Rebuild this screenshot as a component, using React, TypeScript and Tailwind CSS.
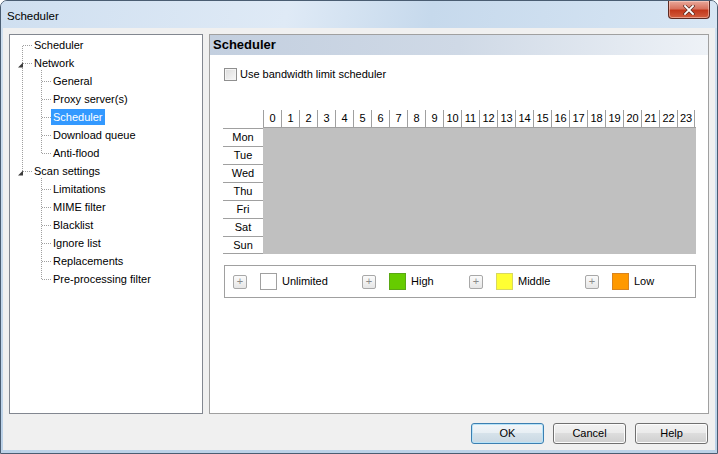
import React from "react";

const font = { fontFamily: '"Liberation Sans", Arial, sans-serif' };

type TreeItem = { label: string; level: 1 | 2; selected?: boolean };

const treeItems: TreeItem[] = [
  { label: "Scheduler", level: 1 },
  { label: "Network", level: 1 },
  { label: "General", level: 2 },
  { label: "Proxy server(s)", level: 2 },
  { label: "Scheduler", level: 2, selected: true },
  { label: "Download queue", level: 2 },
  { label: "Anti-flood", level: 2 },
  { label: "Scan settings", level: 1 },
  { label: "Limitations", level: 2 },
  { label: "MIME filter", level: 2 },
  { label: "Blacklist", level: 2 },
  { label: "Ignore list", level: 2 },
  { label: "Replacements", level: 2 },
  { label: "Pre-processing filter", level: 2 },
];

const days = ["Mon", "Tue", "Wed", "Thu", "Fri", "Sat", "Sun"];
const hours = Array.from({ length: 24 }, (_, i) => i);

// group widths keep the items at the same x as the original dialog
const legend = [
  { label: "Unlimited", swatch: "bg-white border-[#a0a0a0]", width: "w-[129px]" },
  { label: "High", swatch: "bg-[#66cc00] border-[#5aa814]", width: "w-[107px]" },
  { label: "Middle", swatch: "bg-[#ffff33] border-[#d8d860]", width: "w-[116px]" },
  { label: "Low", swatch: "bg-[#ff9900] border-[#d88420]", width: "w-[80px]" },
];

// connector lines of the tree, coords relative to the tree's padding box
function TreeLines() {
  const dot = { stroke: "#a0a0a0", strokeDasharray: "1 1", strokeWidth: 1 };
  const rowY = (i: number) => 10 + i * 18 + 0.5;
  const group1 = [2, 3, 4, 5, 6];
  const group2 = [8, 9, 10, 11, 12, 13];
  return (
    <svg className="pointer-events-none absolute left-0 top-0" width="192" height="300" shapeRendering="crispEdges">
      <line x1="12.5" y1={rowY(0)} x2="12.5" y2={rowY(7)} {...dot} />
      {[0, 1, 7].map((i) => (
        <line key={i} x1="13" y1={rowY(i)} x2="22" y2={rowY(i)} {...dot} />
      ))}
      <line x1="31.5" y1={rowY(1) + 6} x2="31.5" y2={rowY(6)} {...dot} />
      <line x1="31.5" y1={rowY(7) + 6} x2="31.5" y2={rowY(13)} {...dot} />
      {[...group1, ...group2].map((i) => (
        <line key={i} x1="32" y1={rowY(i)} x2="41" y2={rowY(i)} {...dot} />
      ))}
      {[1, 7].map((i) => (
        <polygon key={i} points={`13,${rowY(i) - 1} 13,${rowY(i) + 4} 8,${rowY(i) + 4}`} fill="#3b3b3b" shapeRendering="auto" />
      ))}
    </svg>
  );
}

function PushButton({ label, isDefault }: { label: string; isDefault?: boolean }) {
  return (
    <button
      type="button"
      className={`flex h-[21px] w-[73px] items-center justify-center rounded-[3px] border text-[11px] text-black ${
        isDefault
          ? "border-[#3c7fb1] bg-[linear-gradient(to_bottom,#f2f6f9_0%,#e8eff4_45%,#d6e2ea_50%,#c9d8e3_100%)] shadow-[inset_0_0_0_1px_#b8e3f8]"
          : "border-[#707070] bg-[linear-gradient(to_bottom,#f2f2f2_0%,#ebebeb_45%,#dddddd_50%,#cfcfcf_100%)] shadow-[inset_0_0_0_1px_#fcfcfc]"
      }`}
      style={font}
    >
      {label}
    </button>
  );
}

export default function App() {
  return (
    <div
      className="flex h-[454px] w-[718px] flex-col overflow-hidden rounded-t-[7px] border border-[#4a5d72] bg-[linear-gradient(to_bottom,#d0e0f0,#bcd2e8)] text-[11px] text-black"
      style={font}
    >
      {/* Title bar */}
      <div className="flex h-[27px] shrink-0 items-start justify-between bg-[linear-gradient(100deg,#cfdff0_0%,#dfeaf6_40%,#c6d9ec_60%,#d8e6f4_100%)] pl-[6px] pr-[7px]">
        <span className="mt-[8px] text-[11.5px] leading-[14px] text-black">Scheduler</span>
        <div className="flex h-[18px] w-[42px] items-center justify-center rounded-b-[4px] border border-t-0 border-[#5c2a22] bg-[linear-gradient(to_bottom,#e9a99b_0%,#d8735f_45%,#c2381c_55%,#d25e3e_100%)] shadow-[inset_0_0_0_1px_rgba(255,220,210,0.5)]">
          <svg width="12" height="10" viewBox="0 0 12 10">
            <path d="M2 1 L10 9 M10 1 L2 9" stroke="#5a2a20" strokeWidth="3.2" strokeLinecap="square" />
            <path d="M2 1 L10 9 M10 1 L2 9" stroke="#ffffff" strokeWidth="1.8" strokeLinecap="square" />
          </svg>
        </div>
      </div>

      {/* Client area */}
      <div className="mx-[2px] mb-[3px] flex flex-1 flex-col bg-[#f0f0f0] px-[6px] pt-[6px]">
        <div className="flex h-[380px] gap-[6px]">
          {/* Tree */}
          <div className="relative w-[194px] border border-[#828790] bg-white pt-[1px]">
            <TreeLines />
            {treeItems.map((item, i) => (
              <div key={i} className="flex h-[18px] items-center">
                <span
                  className={`leading-[14px] ${item.level === 1 ? "ml-[24px]" : "ml-[41px] px-[2px]"} ${
                    item.selected ? "bg-[#3399ff] py-[1px] text-white" : ""
                  }`}
                >
                  {item.label}
                </span>
              </div>
            ))}
          </div>

          {/* Right panel */}
          <div className="flex w-[500px] flex-col border border-[#a0a0a0] bg-white">
            <div className="flex h-[20px] items-center bg-[linear-gradient(to_right,#c3cfdf_0%,#cfd9e6_50%,#eef2f7_100%)] pl-[3px]">
              <span className="text-[13px] font-bold leading-[16px]">Scheduler</span>
            </div>

            <div className="flex flex-col pl-[13px]">
              <label className="ml-[1px] mt-[13px] flex items-center gap-[3px]">
                <span className="h-[13px] w-[13px] border border-[#8f8f8f] bg-[linear-gradient(135deg,#dcdcdc,#f8f8f8)] shadow-[inset_0_0_0_1px_#f4f4f4]" />
                <span className="leading-[13px]">Use bandwidth limit scheduler</span>
              </label>

              {/* Hour grid */}
              <div className="mt-[29px] flex">
                <div className="flex w-[40px] flex-col">
                  <div className="h-[18px]" />
                  {days.map((d, i) => (
                    <div
                      key={d}
                      className={`flex h-[18px] items-center justify-center border-t border-[#a0a0a0] ${
                        i === days.length - 1 ? "border-b" : ""
                      }`}
                    >
                      {d}
                    </div>
                  ))}
                </div>
                <div className="flex flex-col">
                  <div className="flex h-[18px] border-b border-[#a0a0a0]">
                    {hours.map((h) => (
                      <div
                        key={h}
                        className={`flex w-[18px] items-center justify-center border-l border-[#a0a0a0] ${
                          h === 23 ? "border-r" : ""
                        }`}
                      >
                        {h}
                      </div>
                    ))}
                  </div>
                  <div className="h-[126px] w-[433px] bg-[#c0c0c0]" />
                </div>
              </div>

              {/* Legend */}
              <div className="ml-[1px] mt-[11px] flex h-[33px] w-[472px] items-center border border-[#a0a0a0] pl-[8px]">
                {legend.map((l) => (
                  <div key={l.label} className={`flex items-center ${l.width}`}>
                    <span className="flex h-[14px] w-[14px] items-center justify-center rounded-[2px] border border-[#a8a8a8] bg-[linear-gradient(to_bottom,#fbfbfb,#e6e6e6)] text-[11px] leading-none text-[#8a8a8a]">
                      +
                    </span>
                    <span className={`ml-[13px] h-[17px] w-[17px] border ${l.swatch}`} />
                    <span className="ml-[5px]">{l.label}</span>
                  </div>
                ))}
              </div>
            </div>
          </div>
        </div>

        {/* Buttons */}
        <div className="mt-[9px] flex justify-end gap-[9px] pr-[1px]">
          <PushButton label="OK" isDefault />
          <PushButton label="Cancel" />
          <PushButton label="Help" />
        </div>
      </div>
    </div>
  );
}
